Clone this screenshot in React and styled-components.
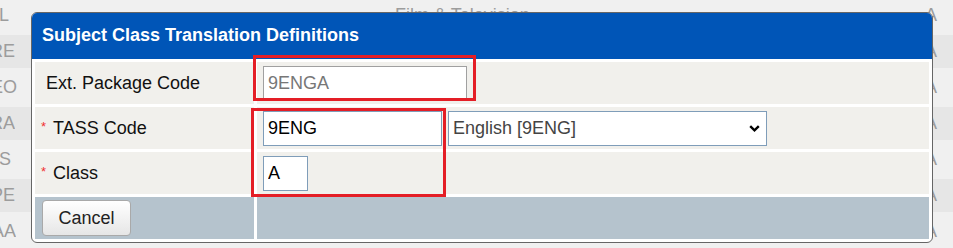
import styled, { createGlobalStyle } from 'styled-components';

const GlobalStyle = createGlobalStyle`
  * { box-sizing: border-box; }
  html, body {
    margin: 0;
    padding: 0;
    background: #f0f0f0;
    font-family: "Liberation Sans", Arial, sans-serif;
    overflow: hidden;
  }
`

const Page = styled.div`
  position: relative;
  width: 953px;
  height: 248px;
  overflow: hidden;
`

const List = styled.div`
  margin-top: -4px;
  display: flex;
  flex-direction: column;
`

const ListRow = styled.div`
  display: grid;
  grid-template-columns: 20px 375px 530px auto;
  align-items: center;
  height: ${p => (p.$dark ? 33 : 39)}px;
  background: ${p => (p.$dark ? '#e6e6e6' : '#f0f0f0')};
  color: #9c9c9c;
  font-size: 18px;
`

const Clip = styled.div`
  width: ${p => p.$end}px;
  display: flex;
  justify-content: flex-end;
  overflow: hidden;
  white-space: nowrap;
`

const Cell = styled.div`
  white-space: nowrap;
  overflow: hidden;
`

const Dialog = styled.div`
  position: absolute;
  left: 31px;
  top: 12px;
  width: 902px;
  border: 1px solid #666;
  border-radius: 6px;
  background: #fff;
  overflow: hidden;
`

const Header = styled.div`
  height: 46px;
  background: #0055b7;
  color: #fff;
  font-size: 18px;
  font-weight: bold;
  display: flex;
  align-items: center;
  padding: 0 10px 2px;
`

const Table = styled.table`
  width: 100%;
  border-spacing: 3px;
  table-layout: fixed;
`

const Row = styled.tr`
  height: 42px;
`

const LabelCell = styled.td`
  width: 219px;
  padding: 0 0 0 ${p => (p.$required ? 6 : p.$footer ? 7 : 11)}px;
  background: ${p => (p.$footer ? '#b5c3cd' : '#f1f0ec')};
  color: #111;
  font-size: 18px;
  vertical-align: middle;
  white-space: nowrap;
`

const ValueCell = styled.td`
  padding: 0 0 0 6px;
  background: ${p => (p.$footer ? '#b5c3cd' : '#f1f0ec')};
  vertical-align: middle;
`

const Star = styled.span`
  display: inline-block;
  width: 12px;
  color: #f03030;
  font-size: 13px;
  vertical-align: 3px;
`

const Field = styled.div`
  display: flex;
  align-items: center;
  gap: 6px;
`

const Input = styled.input`
  width: ${p => p.$width}px;
  height: 35px;
  padding: 0 4px;
  border: 1px solid ${p => (p.readOnly ? '#a0a0a0' : '#7f9db9')};
  background: #fff;
  color: ${p => (p.readOnly ? '#777' : '#000')};
  font-family: inherit;
  font-size: 18px;
  outline: none;
`

const SelectWrap = styled.div`
  position: relative;
  width: 319px;
  height: 35px;
`

const Select = styled.select`
  appearance: none;
  width: 100%;
  height: 100%;
  padding: 0 30px 0 4px;
  border: 1px solid #7f9db9;
  border-radius: 0;
  background: #fff;
  color: #444;
  font-family: inherit;
  font-size: 18px;
  outline: none;
`

const Chevron = styled.svg`
  position: absolute;
  right: 7px;
  top: 14px;
  pointer-events: none;
`

const Button = styled.button`
  width: 89px;
  height: 36px;
  margin: 0;
  border: 1px solid #a9a9a9;
  border-radius: 4px;
  background: linear-gradient(#ffffff, #e6e6e6);
  color: #222;
  font-family: inherit;
  font-size: 18px;
  cursor: pointer;
`

const Highlight = styled.div`
  position: absolute;
  left: ${p => p.$x}px;
  top: ${p => p.$y}px;
  width: ${p => p.$w}px;
  height: ${p => p.$h}px;
  border: 3px solid #e41e26;
  pointer-events: none;
`

const rows = [
  { left: 'GENERAL', end: 9, mid: 'Film & Television' },
  { left: 'LITERATURE', end: 15, mid: 'Literature' },
  { left: 'VIDEO', end: 17, mid: 'Video' },
  { left: 'OPERA', end: 15, mid: 'Opera' },
  { left: 'MATHS', end: 11, mid: 'Maths' },
  { left: 'PE', end: 15, mid: 'Physical Education' },
  { left: 'NAA', end: 16, mid: 'Art' },
]

const App = () => {
  return (
    <Page>
      <GlobalStyle />
      <List>
        {rows.map((r, i) => (
          <ListRow key={i} $dark={i % 2 === 1}>
            <Clip $end={r.end}><span>{r.left}</span></Clip>
            <span />
            <Cell>{r.mid}</Cell>
            <Cell>A</Cell>
          </ListRow>
        ))}
      </List>

      <Dialog>
        <Header>Subject Class Translation Definitions</Header>
        <Table>
          <tbody>
            <Row>
              <LabelCell>Ext. Package Code</LabelCell>
              <ValueCell>
                <Field>
                  <Input $width={204} readOnly defaultValue="9ENGA" />
                </Field>
              </ValueCell>
            </Row>
            <Row>
              <LabelCell $required><Star>*</Star>TASS Code</LabelCell>
              <ValueCell>
                <Field>
                  <Input $width={179} defaultValue="9ENG" />
                  <SelectWrap>
                    <Select defaultValue="9ENG">
                      <option value="9ENG">English [9ENG]</option>
                    </Select>
                    <Chevron width="11" height="7" viewBox="0 0 11 7">
                      <path d="M1.2 1.2 L5.5 5.3 L9.8 1.2" fill="none" stroke="#000" strokeWidth="2.4" />
                    </Chevron>
                  </SelectWrap>
                </Field>
              </ValueCell>
            </Row>
            <Row>
              <LabelCell $required><Star>*</Star>Class</LabelCell>
              <ValueCell>
                <Field>
                  <Input $width={45} defaultValue="A" />
                </Field>
              </ValueCell>
            </Row>
            <Row>
              <LabelCell $footer>
                <Button>Cancel</Button>
              </LabelCell>
              <ValueCell $footer />
            </Row>
          </tbody>
        </Table>
      </Dialog>

      <Highlight $x={253} $y={55} $w={223} $h={46} />
      <Highlight $x={251} $y={108} $w={195} $h={89} />
    </Page>
  )
}

export default App
